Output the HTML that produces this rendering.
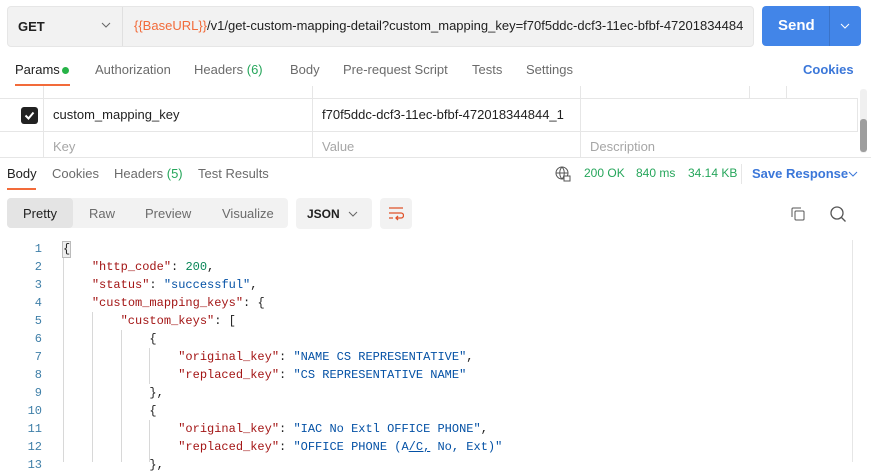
<!DOCTYPE html>
<html><head><style>
body{margin:0;width:871px;height:462px;overflow:hidden;background:#fff;font-family:"Liberation Sans",sans-serif;font-size:13px;color:#212121;position:relative}
.a{position:absolute}
.code{font-family:"Liberation Mono",monospace;font-size:12px;white-space:pre}
.k{color:#a31515}.s{color:#0451a5}.n{color:#098658}.p{color:#212121}
.ln{color:#3f7fa8;text-align:right;width:42px;left:0}
.g{color:#6b6b6b}
</style></head><body>
<!-- top bar -->
<div class="a" style="left:7px;top:6px;width:745px;height:39px;background:#f2f2f2;border:1px solid #e6e6e6;border-radius:4px"></div>
<div class="a" style="left:122px;top:7px;width:1px;height:39px;background:#e0e0e0"></div>
<div class="a" style="left:18px;top:19px;font-weight:bold;font-size:13px">GET</div>
<svg class="a" style="left:101px;top:22px" width="10" height="6"><path d="M1 1l4 4 4-4" stroke="#666" fill="none"/></svg>
<div class="a" style="left:134px;top:18px;font-size:13px"><span style="color:#f26b3a">{{BaseURL}}</span>/v1/get-custom-mapping-detail?custom_mapping_key=f70f5ddc-dcf3-11ec-bfbf-47201834484</div>
<div class="a" style="left:762px;top:6px;width:99px;height:40px;background:#4285e8;border-radius:4px"></div>
<div class="a" style="left:829px;top:6px;width:1px;height:40px;background:#3a73c9"></div>
<div class="a" style="left:778px;top:17px;color:#fff;font-weight:bold;font-size:15px">Send</div>
<svg class="a" style="left:840px;top:23px" width="10" height="6"><path d="M1 1l4 4 4-4" stroke="#fff" fill="none"/></svg>
<!-- tabs -->
<div class="a g" style="top:62px;left:15px;color:#212121">Params</div>
<div class="a" style="left:62px;top:67px;width:7px;height:7px;border-radius:50%;background:#26b347"></div>
<div class="a" style="left:15px;top:84px;width:55px;height:2px;background:#f26b3a"></div>
<div class="a g" style="top:62px;left:95px">Authorization</div>
<div class="a g" style="top:62px;left:194px">Headers <span style="color:#26a65b">(6)</span></div>
<div class="a g" style="top:62px;left:290px">Body</div>
<div class="a g" style="top:62px;left:343px">Pre-request Script</div>
<div class="a g" style="top:62px;left:472px">Tests</div>
<div class="a g" style="top:62px;left:526px">Settings</div>
<div class="a" style="top:62px;left:803px;color:#3b77d9;font-weight:bold">Cookies</div>
<!-- table -->
<div class="a" style="left:0;top:98px;width:857px;height:1px;background:#e6e6e6"></div>
<div class="a" style="left:0;top:131px;width:857px;height:1px;background:#e6e6e6"></div>
<div class="a" style="left:0;top:157px;width:871px;height:1px;background:#e6e6e6"></div>
<div class="a" style="left:43px;top:86px;width:1px;height:71px;background:#e6e6e6"></div>
<div class="a" style="left:312px;top:86px;width:1px;height:71px;background:#e6e6e6"></div>
<div class="a" style="left:580px;top:86px;width:1px;height:71px;background:#e6e6e6"></div>
<div class="a" style="left:749px;top:86px;width:1px;height:12px;background:#e6e6e6"></div>
<div class="a" style="left:786px;top:86px;width:1px;height:12px;background:#e6e6e6"></div>
<div class="a" style="left:857px;top:98px;width:1px;height:34px;background:#e6e6e6"></div>
<div class="a" style="left:21px;top:107px;width:17px;height:17px;background:#212121;border-radius:3px"></div>
<svg class="a" style="left:21px;top:107px" width="17" height="17"><path d="M4.5 8.5l3 3 5-6" stroke="#fff" stroke-width="2" fill="none"/></svg>
<div class="a" style="left:53px;top:107px">custom_mapping_key</div>
<div class="a" style="left:322px;top:107px">f70f5ddc-dcf3-11ec-bfbf-472018344844_1</div>
<div class="a" style="left:53px;top:139px;color:#a6a6a6">Key</div>
<div class="a" style="left:322px;top:139px;color:#a6a6a6">Value</div>
<div class="a" style="left:590px;top:139px;color:#a6a6a6">Description</div>
<div class="a" style="left:860px;top:89px;width:7px;height:64px;background:#f0f0f0;border-radius:3px"></div>
<div class="a" style="left:860px;top:119px;width:7px;height:33px;background:#9e9e9e;border-radius:3px"></div>
<!-- response tabs -->
<div class="a" style="top:166px;left:7px">Body</div>
<div class="a" style="left:7px;top:188px;width:29px;height:2px;background:#f26b3a"></div>
<div class="a g" style="top:166px;left:52px">Cookies</div>
<div class="a g" style="top:166px;left:114px">Headers <span style="color:#26a65b">(5)</span></div>
<div class="a g" style="top:166px;left:198px">Test Results</div>
<svg class="a" style="left:555px;top:166px" width="16" height="16"><circle cx="7" cy="7" r="6" stroke="#555" fill="none"/><path d="M1 7h12M7 1c-3 3-3 9 0 12M7 1c3 3 3 9 0 12" stroke="#555" fill="none"/><rect x="9" y="10" width="6" height="5" fill="#fff" stroke="#555"/></svg>
<div class="a" style="top:166px;left:584px;color:#26a65b;font-size:12px">200 OK</div>
<div class="a" style="top:166px;left:636px;color:#26a65b;font-size:12px">840 ms</div>
<div class="a" style="top:166px;left:688px;color:#26a65b;font-size:12px">34.14 KB</div>
<div class="a" style="left:741px;top:164px;width:1px;height:20px;background:#e6e6e6"></div>
<div class="a" style="top:166px;left:752px;color:#3b77d9;font-weight:bold">Save Response</div>
<svg class="a" style="left:848px;top:171px" width="10" height="6"><path d="M1 1l4 4 4-4" stroke="#3b77d9" fill="none"/></svg>
<!-- buttons -->
<div class="a" style="left:7px;top:198px;width:281px;height:30px;background:#f2f2f2;border-radius:4px"></div>
<div class="a" style="left:7px;top:198px;width:66px;height:30px;background:#e4e4e4;border-radius:4px"></div>
<div class="a" style="left:23px;top:206px">Pretty</div>
<div class="a g" style="left:89px;top:206px">Raw</div>
<div class="a g" style="left:145px;top:206px">Preview</div>
<div class="a g" style="left:222px;top:206px">Visualize</div>
<div class="a" style="left:296px;top:198px;width:76px;height:31px;background:#f2f2f2;border-radius:4px"></div>
<div class="a" style="left:307px;top:207px;font-weight:bold;font-size:12px">JSON</div>
<svg class="a" style="left:348px;top:211px" width="10" height="6"><path d="M1 1l4 4 4-4" stroke="#666" fill="none"/></svg>
<div class="a" style="left:380px;top:198px;width:32px;height:31px;background:#f2f2f2;border-radius:4px"></div>
<svg class="a" style="left:388px;top:206px" width="16" height="16"><path d="M1 2h14M1 7h12a2.5 2.5 0 010 5H8M10 10l-2 2 2 2M1 12h4" stroke="#e0522a" stroke-width="1.3" fill="none"/></svg>
<svg class="a" style="left:790px;top:206px" width="16" height="16"><rect x="5" y="5" width="9" height="9" rx="1" stroke="#555" fill="none"/><path d="M2 11V3a1 1 0 011-1h8" stroke="#555" fill="none"/></svg>
<svg class="a" style="left:829px;top:205px" width="18" height="18"><circle cx="8" cy="8" r="6" stroke="#555" stroke-width="1.3" fill="none"/><path d="M12.5 12.5l4 4" stroke="#555" stroke-width="1.3"/></svg>
<!-- code -->
<div class="a" style="left:852px;top:240px;width:1px;height:222px;background:#e6e6e6"></div>
<div class="a" style="left:63px;top:258px;width:1px;height:204px;background:#d8d8d8"></div>
<div class="a" style="left:92px;top:312px;width:1px;height:150px;background:#d8d8d8"></div>
<div class="a" style="left:121px;top:330px;width:1px;height:132px;background:#d8d8d8"></div>
<div class="a" style="left:149px;top:348px;width:1px;height:36px;background:#d8d8d8"></div>
<div class="a" style="left:149px;top:420px;width:1px;height:42px;background:#d8d8d8"></div>
<div class="a" style="left:62px;top:241px;width:7px;height:15px;background:#eee;border:1px solid #bbb"></div>
<div class="a code ln" style="top:240px;line-height:18px">1
2
3
4
5
6
7
8
9
10
11
12
13</div>
<div class="a code" style="left:63px;top:240px;line-height:18px"><span class="p">{</span>
    <span class="k">"http_code"</span>: <span class="n">200</span>,
    <span class="k">"status"</span>: <span class="s">"successful"</span>,
    <span class="k">"custom_mapping_keys"</span>: {
        <span class="k">"custom_keys"</span>: [
            {
                <span class="k">"original_key"</span>: <span class="s">"NAME CS REPRESENTATIVE"</span>,
                <span class="k">"replaced_key"</span>: <span class="s">"CS REPRESENTATIVE NAME"</span>
            },
            {
                <span class="k">"original_key"</span>: <span class="s">"IAC No Extl OFFICE PHONE"</span>,
                <span class="k">"replaced_key"</span>: <span class="s">"OFFICE PHONE (A<u>/C,</u> No, Ext)"</span>
            },</div>
</body></html>
